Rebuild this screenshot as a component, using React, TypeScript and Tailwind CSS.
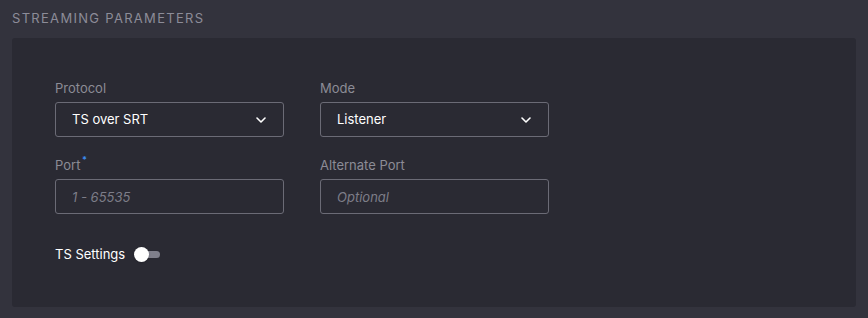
import { useState } from 'react';

function Chevron() {
    return (
        <svg width="10" height="6" viewBox="0 0 10 6" fill="none">
            <path d="M1 1l4 4 4-4" stroke="#ffffff" strokeWidth="1.6" strokeLinecap="round" strokeLinejoin="round" />
        </svg>
    );
}

function SelectBox({ value }: { value: string }) {
    return (
        <div className="flex h-[35px] w-[229px] items-center justify-between rounded-[3px] border border-[#6b6b76] pl-4 pr-[17px] text-[13px] text-white">
            <span>{value}</span>
            <Chevron />
        </div>
    );
}

function TextBox({ placeholder }: { placeholder: string }) {
    return (
        <input
            type="text"
            placeholder={placeholder}
            className="h-[35px] w-[229px] rounded-[3px] border border-[#6b6b76] bg-transparent pl-4 text-[13px] italic text-white outline-none placeholder:text-[#7d7d88]"
        />
    );
}

export default function App() {
    const [tsSettings, setTsSettings] = useState(false);

    return (
        <div
            className="flex h-[318px] w-[868px] flex-col bg-[#33333d] pl-3 pr-3"
            style={{ fontFamily: 'Inter, "Noto Sans", sans-serif' }}
        >
            {/* Titel */}
            <div className="flex h-[38px] items-center pb-[1px] text-[13px] uppercase tracking-[1.3px] text-[#8c8c98]">
                Streaming Parameters
            </div>

            {/* Panel */}
            <div className="flex h-[269px] flex-col rounded-[3px] bg-[#2a2a33] pl-[43px] pt-[42px]">
                <div className="flex gap-9">
                    <div className="flex flex-col">
                        <label className="mb-[6px] text-[13px] leading-[16px] text-[#8c8c96]">Protocol</label>
                        <SelectBox value="TS over SRT" />
                    </div>
                    <div className="flex flex-col">
                        <label className="mb-[6px] text-[13px] leading-[16px] text-[#8c8c96]">Mode</label>
                        <SelectBox value="Listener" />
                    </div>
                </div>

                <div className="mt-[20px] flex gap-9">
                    <div className="flex flex-col">
                        <label className="relative mb-[6px] h-[16px] text-[13px] leading-[16px] text-[#8c8c96]">
                            Port
                            <span className="absolute left-[27px] top-[-2px] text-[9px] font-bold leading-[9px] text-[#3b8cf0]">*</span>
                        </label>
                        <TextBox placeholder="1 - 65535" />
                    </div>
                    <div className="flex flex-col">
                        <label className="mb-[6px] text-[13px] leading-[16px] text-[#8c8c96]">Alternate Port</label>
                        <TextBox placeholder="Optional" />
                    </div>
                </div>

                {/* TS Settings */}
                <div className="mt-[31px] flex items-center gap-[9px]">
                    <span className="text-[13px] text-white">TS Settings</span>
                    <button
                        type="button"
                        onClick={() => setTsSettings(!tsSettings)}
                        className="relative flex h-[16px] w-[27px] items-center"
                    >
                        <span className="absolute left-[4px] h-[7px] w-[22px] rounded-full bg-[#80808c]" />
                        <span
                            className={
                                tsSettings
                                    ? 'absolute left-[11px] h-[15px] w-[15px] rounded-full bg-white shadow'
                                    : 'absolute left-0 h-[15px] w-[15px] rounded-full bg-white shadow'
                            }
                        />
                    </button>
                </div>
            </div>
        </div>
    );
}
